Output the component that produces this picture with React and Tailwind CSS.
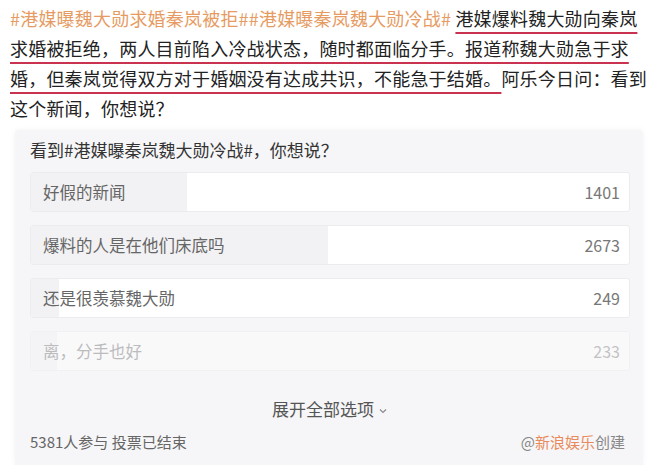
import React from 'react'

const options = [
  { text: '好假的新闻', count: 1401 },
  { text: '爆料的人是在他们床底吗', count: 2673 },
  { text: '还是很羡慕魏大勋', count: 249 },
  { text: '离，分手也好', count: 233 },
]

const total = 5381

function OptionRow({ text, count, faded }) {
  const pct = (count / total) * 100
  return (
    <div className={'relative h-[40px] rounded-[3px] border border-[#ececee] bg-white overflow-hidden ' + (faded ? 'opacity-40' : '')}>
      <div className="absolute inset-y-0 left-0 bg-[#f2f2f4]" style={{ width: pct + '%' }} />
      <div className="relative flex h-full items-center justify-between pl-3 pr-[9px] text-[16.5px] text-[#666]">
        <span>{text}</span>
        <span className="text-[16px] text-[#777]">{count}</span>
      </div>
    </div>
  )
}

export default function App() {
  const hl = 'underline decoration-[#c9334f] decoration-2 underline-offset-[6px]'
  return (
    <div className="h-[465px] w-[660px] overflow-hidden bg-white font-['Noto_Sans_CJK_SC',sans-serif]">
      <div className="pl-[10px] pt-[3px] text-[18px] leading-[30px] text-[#222] tracking-[0.2px]">
        <div className="whitespace-nowrap">
          <span className="text-[#e69b63]">#港媒曝魏大勋求婚秦岚被拒##港媒曝秦岚魏大勋冷战#</span>{' '}
          <span className={hl}>港媒爆料魏大勋向秦岚</span>
        </div>
        <div className="whitespace-nowrap">
          <span className={hl}>求婚被拒绝，两人目前陷入冷战状态，随时都面临分手。报道称魏大勋急于求</span>
        </div>
        <div className="whitespace-nowrap">
          <span className={hl}>婚，但秦岚觉得双方对于婚姻没有达成共识，不能急于结婚。</span>
          <span>阿乐今日问：看到</span>
        </div>
        <div className="whitespace-nowrap">这个新闻，你想说？</div>
      </div>

      <div className="ml-[15px] mt-[7px] w-[628px] rounded-t-[4px] bg-[#f6f6f8] pl-[15px] pr-[13px] pt-[8px] shadow-[0_0_6px_rgba(0,0,0,0.05)]">
        <div className="text-[17px] leading-[24px] text-[#333]">看到#港媒曝秦岚魏大勋冷战#，你想说？</div>
        <div className="mt-[10px] flex flex-col gap-[13px]">
          {options.map((o, i) => (
            <OptionRow key={o.text} text={o.text} count={o.count} faded={i === 3} />
          ))}
        </div>
        <div className="mt-[26px] flex items-center justify-center gap-[4px] text-[17px] leading-[24px] text-[#555]">
          <span>展开全部选项</span>
          <svg width="10" height="10" viewBox="0 0 10 10" className="mt-[3px]">
            <path d="M2 3.5 L5 6.5 L8 3.5" fill="none" stroke="#888" strokeWidth="1.1" />
          </svg>
        </div>
        <div className="mt-[9px] flex items-center justify-between pb-[12px] pr-[5px] text-[15px] leading-[24px] text-[#666]">
          <span>5381人参与 投票已结束</span>
          <span className="text-[#888]">
            @<span className="text-[#e98a5c]">新浪娱乐</span>创建
          </span>
        </div>
      </div>
    </div>
  )
}
